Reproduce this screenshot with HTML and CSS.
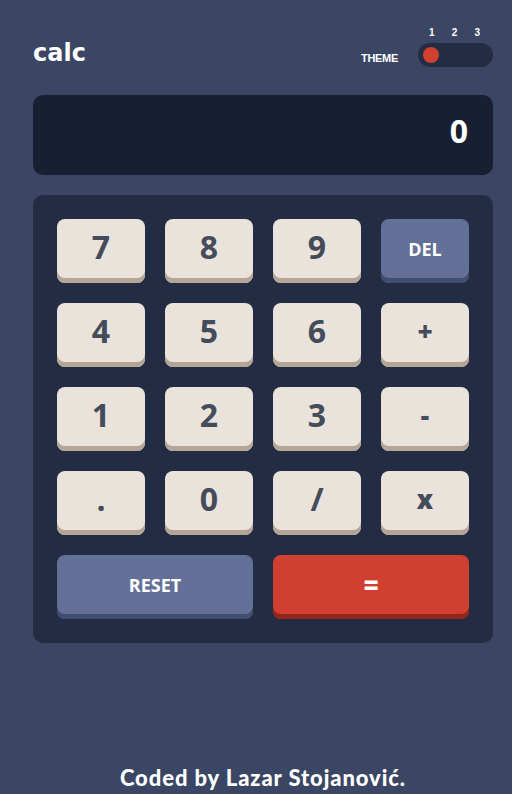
FILE: index.html
```html
<!DOCTYPE html>
<html lang="en">
<head>
<meta charset="utf-8">
<title>calc</title>
<link rel="stylesheet" href="styles.css">
</head>
<body>
<main class="app">
  <header class="top">
    <h1 class="logo">calc</h1>
    <div class="theme">
      <span class="theme-label">THEME</span>
      <div class="switch-wrap">
        <div class="nums"><span>1</span><span>2</span><span>3</span></div>
        <div class="switch"><span class="knob"></span></div>
      </div>
    </div>
  </header>
  <div class="screen"><span class="value">0</span></div>
  <div class="pad">
    <button class="key">7</button>
    <button class="key">8</button>
    <button class="key">9</button>
    <button class="key key-blue key-word">DEL</button>
    <button class="key">4</button>
    <button class="key">5</button>
    <button class="key">6</button>
    <button class="key key-op">+</button>
    <button class="key">1</button>
    <button class="key">2</button>
    <button class="key">3</button>
    <button class="key key-op">-</button>
    <button class="key">.</button>
    <button class="key">0</button>
    <button class="key">/</button>
    <button class="key key-op">x</button>
    <button class="key key-blue key-word key-wide">RESET</button>
    <button class="key key-red key-word key-wide key-eq">=</button>
  </div>
  <footer class="credit">Coded by Lazar Stojanović.</footer>
</main>
</body>
</html>
```
FILE: styles.css
```css
* { box-sizing: border-box; }
html, body { margin: 0; padding: 0; }
body {
  background: #3a4663;
  color: #fff;
  font-family: "Open Sans", "Liberation Sans", sans-serif;
  width: 512px;
  height: 794px;
  overflow: hidden;
}
.app {
  padding: 28px 19px 0 33px;
}
.top {
  display: flex;
  justify-content: space-between;
  align-items: flex-end;
  height: 39px;
}
.logo {
  margin: 0;
  font-family: "DejaVu Sans", Lato, sans-serif;
  font-weight: 700;
  font-size: 24px;
  line-height: 28px;
  letter-spacing: 0;
}
.theme {
  display: flex;
  align-items: flex-end;
  gap: 20px;
}
.theme-label {
  font-family: "Liberation Sans", Arial, sans-serif;
  font-weight: 700;
  font-size: 11px;
  line-height: 24px;
  height: 24px;
  padding-top: 3px;
  letter-spacing: -0.3px;
}
.switch-wrap {
  width: 75px;
  display: flex;
  flex-direction: column;
  gap: 5px;
}
.nums {
  display: flex;
  justify-content: space-between;
  padding: 0 13px 0 11px;
  font-family: "Liberation Sans", Arial, sans-serif;
  font-weight: 700;
  font-size: 10px;
  line-height: 10px;
}
.switch {
  height: 24px;
  border-radius: 12px;
  background: #232c43;
  padding: 4px 5px;
}
.knob {
  display: block;
  width: 16px;
  height: 16px;
  border-radius: 50%;
  background: #d03f2f;
}
.screen {
  margin-top: 28px;
  height: 80px;
  width: 460px;
  border-radius: 10px;
  background: #181f33;
  display: flex;
  align-items: center;
  justify-content: flex-end;
  padding: 0 25px 8px 25px;
}
.value {
  font-weight: 700;
  font-size: 32px;
  line-height: 1;
}
.pad {
  margin-top: 20px;
  width: 460px;
  border-radius: 10px;
  background: #232c43;
  padding: 24px;
  display: grid;
  grid-template-columns: repeat(4, 88px);
  grid-auto-rows: 64px;
  gap: 20px;
}
.key {
  border: none;
  margin: 0;
  border-radius: 8px;
  background: #eae3dc;
  box-shadow: inset 0 -5px 0 #b4a597;
  color: #444b5a;
  font-family: "Open Sans", "Liberation Sans", sans-serif;
  font-weight: 700;
  font-size: 32px;
  line-height: 1;
  display: flex;
  align-items: center;
  justify-content: center;
  padding: 0 0 8px 0;
}
.key-op {
  font-size: 26px;
  font-weight: 800;
}
.key-word {
  font-size: 18px;
  padding-bottom: 4px;
  color: #fff;
}
.key-blue {
  background: #637097;
  box-shadow: inset 0 -5px 0 #404e72;
}
.key-red {
  background: #d03f2f;
  box-shadow: inset 0 -5px 0 #93261a;
}
.key-wide { grid-column: span 2; }
.key-eq { font-size: 26px; font-weight: 800; }
.credit {
  margin-top: 122px;
  width: 460px;
  text-align: center;
  font-family: Lato, "Liberation Sans", sans-serif;
  font-weight: 900;
  font-size: 22px;
  line-height: 1.2;
  letter-spacing: 0.9px;
}
```
